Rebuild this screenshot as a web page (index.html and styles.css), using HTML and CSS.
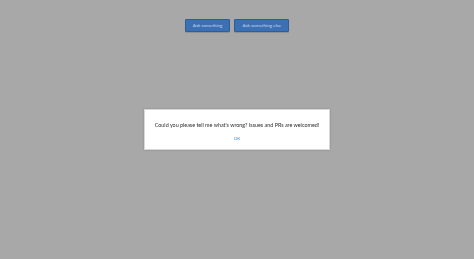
FILE: index.html
```html
<!DOCTYPE html>
<html>
<head>
<meta charset="utf-8">
<link rel="stylesheet" href="styles.css">
</head>
<body>
<div class="toolbar">
  <button class="btn">Ask something</button>
  <button class="btn">Ask something else</button>
</div>
<div class="overlay">
  <div class="dialog">
    <p class="message">Could you please tell me what's wrong? Issues and PRs are welcomed!</p>
    <button class="ok">OK</button>
  </div>
</div>
</body>
</html>
```
FILE: styles.css
```css
html, body {
  margin: 0;
  padding: 0;
  height: 100%;
}
body {
  background: #a8a8a8;
  font-family: Lato, "Open Sans", sans-serif;
}
.toolbar {
  display: flex;
  justify-content: center;
  gap: 4px;
  padding-top: 19px;
}
.btn {
  height: 13px;
  padding: 0 7px;
  background: #3b70b5;
  border: 1px solid #2e5d9a;
  border-radius: 1px;
  color: #c9d6e8;
  font-family: Lato, "Open Sans", sans-serif;
  font-size: 4.6px;
  line-height: 11px;
  white-space: nowrap;
  box-shadow: 0 1px 1px rgba(0,0,0,0.15);
}
.overlay {
  position: fixed;
  inset: 0;
  display: flex;
  align-items: center;
  justify-content: center;
}
.dialog {
  width: 186px;
  height: 41px;
  background: #ffffff;
  border: 1px solid #d8d8d8;
  box-sizing: border-box;
  box-shadow: 0 0 2px rgba(0,0,0,0.2);
  display: flex;
  flex-direction: column;
  align-items: center;
  padding-top: 12px;
}
.message {
  margin: 0;
  font-size: 5.4px;
  line-height: 7px;
  color: #2e2e2e;
  text-align: center;
  white-space: nowrap;
}
.ok {
  margin-top: 6px;
  background: none;
  border: none;
  padding: 0;
  font-family: Lato, "Open Sans", sans-serif;
  font-size: 4.6px;
  line-height: 6px;
  color: #4a90d9;
}
```
